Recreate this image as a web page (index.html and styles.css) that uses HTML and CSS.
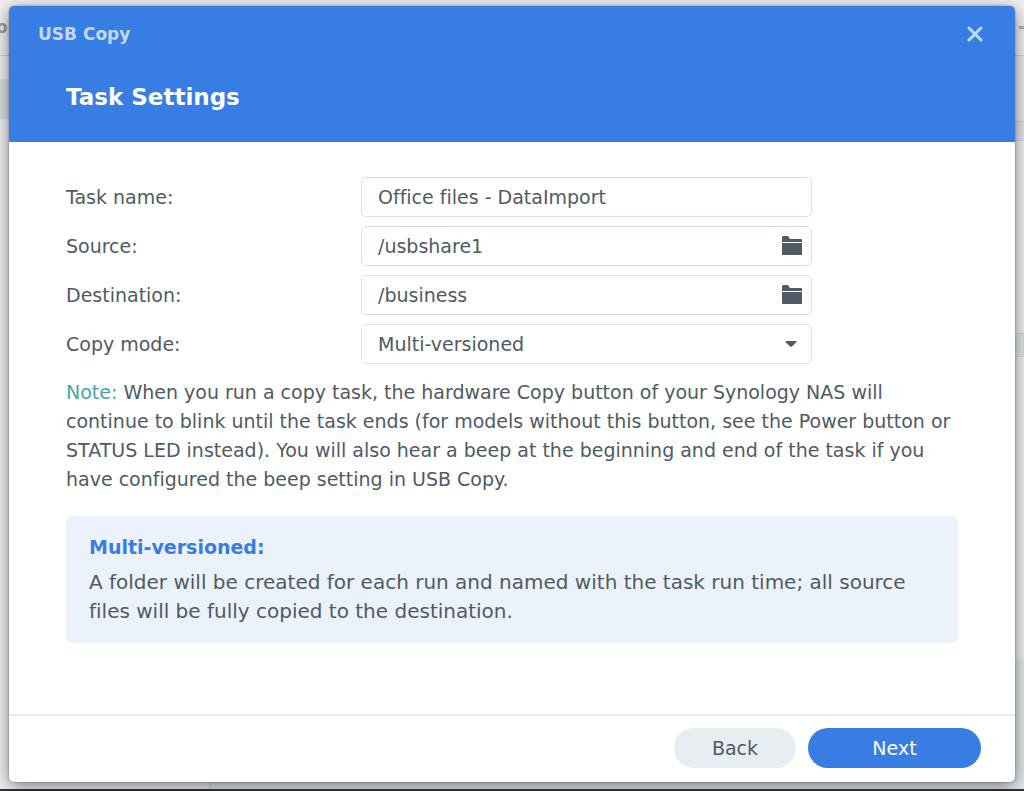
FILE: index.html
```
<!DOCTYPE html>
<html lang="en">
<head>
  <meta charset="UTF-8">
  <meta name="viewport" content="width=device-width, initial-scale=1.0">
  <title>USB Copy</title>
  <link rel="stylesheet" href="styles.css">
</head>
<body>
  <!-- window behind the wizard -->
  <div class="backdrop" aria-hidden="true">
    <div class="back-title"><span>o</span><span class="back-minimize"></span></div>
    <div class="back-toolbar">
      <div class="back-tab"></div>
      <div class="back-actions"></div>
    </div>
    <div class="back-content">
      <div class="back-row"></div>
    </div>
    <div class="back-footer"></div>
  </div>

  <main class="wizard">
    <header class="wizard-header">
      <div class="title-bar">
        <span class="app-name">USB Copy</span>
        <button class="close-button" type="button" aria-label="Close">
          <svg width="16" height="16" viewBox="0 0 16 16">
            <path d="M2 2L14 14M14 2L2 14" fill="none" stroke="currentColor" stroke-width="3" stroke-linecap="round"/>
          </svg>
        </button>
      </div>
      <h1>Task Settings</h1>
    </header>

    <form class="wizard-form">
      <div class="wizard-body">
        <div class="fields">
          <label for="task-name">Task name:</label>
          <div class="field">
            <input type="text" id="task-name" value="Office files - DataImport">
          </div>

          <label for="source">Source:</label>
          <div class="field">
            <input type="text" id="source" value="/usbshare1">
            <button class="browse-button" type="button" aria-label="Browse source">
              <svg width="22" height="20" viewBox="0 0 22 20">
                <path d="M1 6V2Q1 0 2 0H7L9 3H20Q21 3 21 4V6ZM1 7H21V18Q21 19 20 19H2Q1 19 1 18Z" fill="currentColor"/>
              </svg>
            </button>
          </div>

          <label for="destination">Destination:</label>
          <div class="field">
            <input type="text" id="destination" value="/business">
            <button class="browse-button" type="button" aria-label="Browse destination">
              <svg width="22" height="20" viewBox="0 0 22 20">
                <path d="M1 6V2Q1 0 2 0H7L9 3H20Q21 3 21 4V6ZM1 7H21V18Q21 19 20 19H2Q1 19 1 18Z" fill="currentColor"/>
              </svg>
            </button>
          </div>

          <label for="copy-mode">Copy mode:</label>
          <div class="field">
            <select id="copy-mode">
              <option>Multi-versioned</option>
              <option>Mirroring</option>
              <option>Incremental</option>
            </select>
            <svg class="arrow" width="12" height="6" viewBox="0 0 12 6">
              <path d="M1 0H11Q12 0 11.500 1L7 5.500Q6 6 5 5.500L.5 1Q0 0 1 0Z" fill="currentColor"/>
            </svg>
          </div>
        </div>

        <p class="note">
          <span class="note-label">Note:</span> When you run a copy task, the hardware Copy button of your Synology NAS will<br>
          continue to blink until the task ends (for models without this button, see the Power button or<br>
          STATUS LED instead). You will also hear a beep at the beginning and end of the task if you<br>
          have configured the beep setting in USB Copy.
        </p>

        <section class="mode-info">
          <h2>Multi-versioned:</h2>
          <p>A folder will be created for each run and named with the task run time; all source<br>
          files will be fully copied to the destination.</p>
        </section>
      </div>

      <footer class="wizard-footer">
        <button class="button" type="button">Back</button>
        <button class="button primary" type="submit">Next</button>
      </footer>
    </form>
  </main>
</body>
</html>
```
FILE: styles.css
```
* {
  margin: 0;
  padding: 0;
  box-sizing: border-box;
}
body {
  display: flex;
  min-height: 100vh;
  padding: 6px 9px 9px;
  background: #f4f4f4;
  color: #505a64;
  font-family: Verdana, "DejaVu Sans", sans-serif;
  font-size: 19px;
  line-height: 29px;
  font-variant-ligatures: none;
}
input, select, button {
  font: inherit;
  font-variant-ligatures: none;
  color: inherit;
}
button {
  border: none;
  background: none;
  cursor: pointer;
}

/* window behind */
.backdrop {
  position: absolute;
  inset: 0;
  display: flex;
  flex-direction: column;
  overflow: hidden;
  background: #f2f2f2;
  border-bottom: 2px solid #35333a;
}
.back-title {
  display: flex;
  justify-content: space-between;
  align-items: center;
  height: 56px;
  border-bottom: 1px solid #d0d5da;
  color: #a0a0a0;
  font-size: 17px;
  font-weight: bold;
  text-indent: -4px;
}
.back-minimize {
  width: 5px;
  height: 3px;
  background: #b5b5b5;
}
.back-toolbar {
  display: flex;
  height: 85px;
}
.back-tab {
  width: 209px;
  height: 40px;
  margin-top: 23px;
  background: #d9dfe3;
}
.back-actions {
  flex: 1;
  border-bottom: 1px solid #d0d8e0;
  background: linear-gradient(#ebebeb 65px, #c5ccd4 65px, #c5ccd4 66px, #e3e7ea 66px);
}
.back-content {
  flex: 1;
  padding: 192px 0 0 209px;
}
.back-row {
  height: 24px;
  border: 1px solid #d5dbe0;
  background: #e4e8eb;
}
.back-footer {
  height: 130px;
  background: linear-gradient(to right, #f2f2f2 209px, #d0d6da 209px, #e4e9ec 211px);
}

/* wizard */
.wizard {
  position: relative;
  flex: 1;
  display: flex;
  flex-direction: column;
  border-radius: 5px;
  background: #fff;
  box-shadow: 0 0 2px rgba(0, 0, 0, 0.4), 0 4px 18px rgba(0, 0, 0, 0.5);
  overflow: hidden;
}
.wizard-header {
  padding: 12px 29px 30px;
  background: #387de4;
}
.title-bar {
  display: flex;
  justify-content: space-between;
  align-items: center;
  height: 32px;
}
.app-name {
  color: #c3d8f7;
  font-size: 17px;
  font-weight: bold;
}
.close-button {
  display: flex;
  padding: 3px;
  color: #c3d8f7;
}
.wizard-header h1 {
  margin-top: 32px;
  padding-left: 28px;
  color: #fff;
  font-size: 23px;
  line-height: 30px;
}
.wizard-form {
  flex: 1;
  display: flex;
  flex-direction: column;
}
.wizard-body {
  flex: 1;
  padding: 35px 57px;
}
.fields {
  display: grid;
  grid-template-columns: 295px minmax(0, 451px);
  row-gap: 9px;
  align-items: center;
}
.field {
  position: relative;
}
.field input, .field select {
  display: block;
  width: 100%;
  height: 40px;
  padding: 0 16px;
  border: 1px solid #d7e0e9;
  border-radius: 5px;
  background: #fff;
  appearance: none;
}
.browse-button {
  position: absolute;
  top: 10px;
  right: 9px;
  display: flex;
}
.arrow {
  position: absolute;
  top: 17px;
  right: 15px;
  pointer-events: none;
}
.note {
  margin-top: 14px;
}
.note-label {
  color: #4ba5a7;
}
.mode-info {
  margin-top: 22px;
  padding: 17px 23px;
  border-radius: 6px;
  background: #ebf2fc;
  font-size: 20px;
}
.mode-info h2 {
  margin-bottom: 6px;
  color: #387de4;
  font-size: 19px;
}
.wizard-footer {
  display: flex;
  justify-content: flex-end;
  gap: 12px;
  padding: 12px 34px 14px;
  border-top: 2px solid #e8edf1;
}
.button {
  width: 122px;
  height: 40px;
  border-radius: 20px;
  background: #e8edf1;
}
.primary {
  width: 173px;
  background: #387de4;
  color: #fff;
}
```
